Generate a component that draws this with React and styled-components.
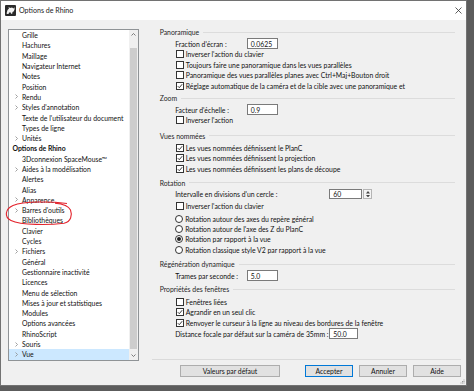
import React from "react";
import styled, { createGlobalStyle } from "styled-components";

const GlobalStyle = createGlobalStyle`
  * { box-sizing: border-box; }
  html, body { margin: 0; padding: 0; background: #5c5c5c; }
  body {
    font-family: Lato, "Noto Sans", sans-serif;
    font-size: 6.85px;
    color: #111;
  }
  #root { width: 474px; height: 391px; overflow: hidden; }
`;

const treeItems = [
  { label: "Grille" },
  { label: "Hachures" },
  { label: "Maillage" },
  { label: "Navigateur Internet" },
  { label: "Notes" },
  { label: "Position" },
  { label: "Rendu", more: true },
  { label: "Styles d'annotation", more: true },
  { label: "Texte de l'utilisateur du document" },
  { label: "Types de ligne" },
  { label: "Unités", more: true },
  { label: "Options de Rhino", root: true },
  { label: "3Dconnexion SpaceMouse™" },
  { label: "Aides à la modélisation", more: true },
  { label: "Alertes" },
  { label: "Alias" },
  { label: "Apparence", more: true },
  { label: "Barres d'outils", more: true },
  { label: "Bibliothèques" },
  { label: "Clavier" },
  { label: "Cycles" },
  { label: "Fichiers", more: true },
  { label: "Général" },
  { label: "Gestionnaire inactivité" },
  { label: "Licences" },
  { label: "Menu de sélection" },
  { label: "Mises à jour et statistiques" },
  { label: "Modules" },
  { label: "Options avancées" },
  { label: "RhinoScript" },
  { label: "Souris", more: true },
  { label: "Vue", more: true, selected: true },
];

const Window = styled.div`
  position: relative;
  width: 467px;
  height: 386px;
  background: #f0f0f0;
  border: 1px solid #727272;
  display: flex;
  flex-direction: column;
`;

const TitleBar = styled.div`
  height: 19px;
  background: #ffffff;
  display: flex;
  align-items: center;
  padding: 0 0 0 4px;
  gap: 3px;
  font-size: 7.1px;
  color: #222;
`;

const Title = styled.span`
  flex: 1;
`;

const CloseBtn = styled.div`
  width: 14px;
  height: 19px;
  display: flex;
  align-items: center;
  justify-content: center;
  margin-right: 1px;
`;

const Body = styled.div`
  flex: 1;
  display: flex;
  padding: 6px 5px 8px 7px;
  gap: 13px;
`;

const TreeBox = styled.div`
  width: 131px;
  height: 332px;
  margin-top: 3px;
  border: 1px solid #8f9396;
  background: #ffffff;
  display: flex;
`;

const TreeList = styled.div`
  flex: 1;
  display: flex;
  flex-direction: column;
  overflow: hidden;
`;

const TreeRow = styled.div`
  height: 10.3px;
  flex: none;
  display: flex;
  align-items: center;
  padding-left: ${(p) => (p.$root ? "3.5px" : "4px")};
  font-weight: ${(p) => (p.$root ? 700 : 400)};
  background: ${(p) => (p.$selected ? "#cce8ff" : "transparent")};
  white-space: nowrap;
`;

const Expander = styled.span`
  width: 9px;
  flex: none;
  display: flex;
  align-items: center;
  padding-left: 1.5px;
`;

const ScrollBar = styled.div`
  width: 9px;
  background: #f0f0f0;
  display: flex;
  flex-direction: column;
`;

const ScrollArrow = styled.div`
  height: 9px;
  display: flex;
  align-items: center;
  justify-content: center;
`;

const ScrollThumb = styled.div`
  flex: 1;
  margin: 9px 1px 2px;
  background: #cdcdcd;
`;

const Panel = styled.div`
  width: 310px;
  display: flex;
  flex-direction: column;
`;

const Groups = styled.div`
  flex: 1;
  display: flex;
  flex-direction: column;
`;

const Group = styled.div`
  margin-top: ${(p) => p.$mt || 0}px;
  display: flex;
  flex-direction: column;
  padding-right: 6px;
`;

const GroupHeader = styled.div`
  height: 12px;
  display: flex;
  align-items: center;
  gap: 4px;
  padding-left: 8px;
  color: #1f1f1f;
  &::after {
    content: "";
    flex: 1;
    height: 1px;
    background: #dcdcdc;
  }
`;

const CheckRow = styled.div`
  height: 10.5px;
  margin-top: ${(p) => p.$mt || 0}px;
  display: flex;
  align-items: center;
  gap: 2px;
  padding-left: 24px;
  white-space: nowrap;
`;

const Box = styled.span`
  width: 8px;
  height: 8px;
  flex: none;
  border: 1px solid #333;
  background: #fff;
  display: flex;
  align-items: center;
  justify-content: center;
`;

const RadioList = styled.div`
  margin-top: 2.5px;
  display: flex;
  flex-direction: column;
`;

const RadioRow = styled.div`
  height: 10.3px;
  display: flex;
  align-items: center;
  gap: 2px;
  padding-left: 23.5px;
  white-space: nowrap;
`;

const RadioCircle = styled.span`
  width: 8px;
  height: 8px;
  flex: none;
  border-radius: 50%;
  border: 1px solid #333;
  background: #fff;
  display: flex;
  align-items: center;
  justify-content: center;
  &::after {
    content: "";
    width: 4px;
    height: 4px;
    border-radius: 50%;
    background: ${(p) => (p.$on ? "#222" : "transparent")};
  }
`;

const FieldRow = styled.div`
  height: 11px;
  display: flex;
  align-items: center;
  padding-left: 23.5px;
  white-space: nowrap;
`;

const FieldLabel = styled.span`
  width: ${(p) => p.$w}px;
  flex: none;
`;

const TextBox = styled.div`
  width: ${(p) => p.$w}px;
  height: 10.5px;
  flex: none;
  border: 1px solid #7a7a7a;
  background: #fff;
  display: flex;
  align-items: center;
  padding-left: 3px;
`;

const SpinArrows = styled.div`
  width: 9px;
  height: 10.5px;
  margin-left: 1px;
  display: flex;
  flex-direction: column;
  align-items: center;
  justify-content: center;
  gap: 1px;
  border: 1px solid #b5b5b5;
  background: #f4f4f4;
`;

const Separator = styled.div`
  height: 1px;
  width: 309px;
  background: #dadada;
`;

const ButtonRow = styled.div`
  margin-top: 5px;
  height: 12px;
  display: flex;
  justify-content: flex-end;
  gap: 6px;
`;

const Button = styled.div`
  width: ${(p) => p.$w}px;
  height: 12px;
  margin-right: ${(p) => p.$mr || 0}px;
  background: #e1e1e1;
  border: 1px solid ${(p) => (p.$primary ? "#0078d7" : "#adadad")};
  display: flex;
  align-items: center;
  justify-content: center;
`;

const Annotation = styled.svg`
  position: absolute;
  left: -1px;
  top: -1px;
  pointer-events: none;
`;

const Grip = styled.svg`
  position: absolute;
  right: 1px;
  bottom: 1px;
`;

const Chevron = () => (
  <svg width="3" height="5" viewBox="0 0 3 5">
    <path d="M0.5 0.5 L2.5 2.5 L0.5 4.5" fill="none" stroke="#8a8a8a" strokeWidth="0.8" />
  </svg>
);

const Check = ({ on, children, mt }) => (
  <CheckRow $mt={mt}>
    <Box>
      {on && (
        <svg width="6" height="6" viewBox="0 0 6 6">
          <path d="M0.8 3.2 L2.3 4.7 L5.2 1.2" fill="none" stroke="#222" strokeWidth="0.9" />
        </svg>
      )}
    </Box>
    <span>{children}</span>
  </CheckRow>
);

const Radio = ({ on, children }) => (
  <RadioRow>
    <RadioCircle $on={on} />
    <span>{children}</span>
  </RadioRow>
);

const Field = ({ label, labelWidth, value, width }) => (
  <FieldRow>
    <FieldLabel $w={labelWidth}>{label}</FieldLabel>
    <TextBox $w={width}>{value}</TextBox>
  </FieldRow>
);

const RhinoIcon = () => (
  <svg width="11" height="11" viewBox="0 0 11 11">
    <rect x="0" y="0" width="11" height="11" rx="1" fill="#2a2a2a" />
    <path
      d="M1.5 8.5 L2.5 5 L4 3.5 L3.5 1.8 L5 3 L7 2.5 L8.5 3.5 L9.6 2.2 L9.5 4.8 L8.6 6.5 L7.5 7 L7.2 8.8 L6 8.8 L5.8 7.4 L4 7.6 L3.6 9 L2.4 9 Z"
      fill="#f2f2f2"
    />
  </svg>
);

export default function App() {
  return (
    <>
      <GlobalStyle />
      <Window>
        <TitleBar>
          <RhinoIcon />
          <Title>Options de Rhino</Title>
          <CloseBtn>
            <svg width="7" height="7" viewBox="0 0 7 7">
              <path d="M0.5 0.5 L6.5 6.5 M6.5 0.5 L0.5 6.5" stroke="#333" strokeWidth="0.8" />
            </svg>
          </CloseBtn>
        </TitleBar>

        <Body>
          <TreeBox>
            <TreeList>
              {treeItems.map((item) => (
                <TreeRow key={item.label} $root={item.root} $selected={item.selected}>
                  {!item.root && <Expander>{item.more && <Chevron />}</Expander>}
                  <span>{item.label}</span>
                </TreeRow>
              ))}
            </TreeList>
            <ScrollBar>
              <ScrollArrow>
                <svg width="5" height="3" viewBox="0 0 5 3">
                  <path d="M0.5 2.5 L2.5 0.5 L4.5 2.5" fill="none" stroke="#606060" strokeWidth="0.8" />
                </svg>
              </ScrollArrow>
              <ScrollThumb />
              <ScrollArrow>
                <svg width="5" height="3" viewBox="0 0 5 3">
                  <path d="M0.5 0.5 L2.5 2.5 L4.5 0.5" fill="none" stroke="#606060" strokeWidth="0.8" />
                </svg>
              </ScrollArrow>
            </ScrollBar>
          </TreeBox>

          <Panel>
            <Groups>
              <Group>
                <GroupHeader>Panoramique</GroupHeader>
                <Field label="Fraction d'écran :" labelWidth={71.5} value="0.0625" width={31} />
                <Check>Inverser l'action du clavier</Check>
                <Check>Toujours faire une panoramique dans les vues parallèles</Check>
                <Check>Panoramique des vues parallèles planes avec Ctrl+Maj+Bouton droit</Check>
                <Check on>Réglage automatique de la caméra et de la cible avec une panoramique et</Check>
              </Group>

              <Group $mt={1}>
                <GroupHeader>Zoom</GroupHeader>
                <Field label="Facteur d'échelle :" labelWidth={71.5} value="0.9" width={31} />
                <Check>Inverser l'action</Check>
              </Group>

              <Group $mt={4}>
                <GroupHeader>Vues nommées</GroupHeader>
                <Check on mt={1}>Les vues nommées définissent le PlanC</Check>
                <Check on>Les vues nommées définissent la projection</Check>
                <Check on>Les vues nommées définissent les plans de découpe</Check>
              </Group>

              <Group $mt={2.5}>
                <GroupHeader>Rotation</GroupHeader>
                <FieldRow>
                  <FieldLabel $w={154}>Intervalle en divisions d'un cercle :</FieldLabel>
                  <TextBox $w={33}>60</TextBox>
                  <SpinArrows>
                    <svg width="4" height="2.5" viewBox="0 0 4 2.5">
                      <path d="M0 2.5 L2 0 L4 2.5 Z" fill="#444" />
                    </svg>
                    <svg width="4" height="2.5" viewBox="0 0 4 2.5">
                      <path d="M0 0 L2 2.5 L4 0 Z" fill="#444" />
                    </svg>
                  </SpinArrows>
                </FieldRow>
                <Check mt={1}>Inverser l'action du clavier</Check>
                <RadioList>
                  <Radio>Rotation autour des axes du repère général</Radio>
                  <Radio>Rotation autour de l'axe des Z du PlanC</Radio>
                  <Radio on>Rotation par rapport à la vue</Radio>
                  <Radio>Rotation classique style V2 par rapport à la vue</Radio>
                </RadioList>
              </Group>

              <Group $mt={3.5}>
                <GroupHeader>Régénération dynamique</GroupHeader>
                <Field label="Trames par seconde :" labelWidth={71.5} value="5.0" width={31} />
              </Group>

              <Group $mt={2}>
                <GroupHeader>Propriétés des fenêtres</GroupHeader>
                <Check mt={1.5}>Fenêtres liées</Check>
                <Check on>Agrandir en un seul clic</Check>
                <Check on>Renvoyer le curseur à la ligne au niveau des bordures de la fenêtre</Check>
                <Field
                  label="Distance focale par défaut sur la caméra de 35mm :"
                  labelWidth={154}
                  value="50.0"
                  width={29}
                />
              </Group>
            </Groups>

            <Separator />
            <ButtonRow>
              <Button $w={100} $mr={19}>Valeurs par défaut</Button>
              <Button $w={48} $primary>Accepter</Button>
              <Button $w={48}>Annuler</Button>
              <Button $w={48}>Aide</Button>
            </ButtonRow>
          </Panel>
        </Body>

        <Annotation width="80" height="232" viewBox="0 0 80 232">
          <path
            d="M67 203.5 C52 201.5 24 201 13 205.5 C5 209 4 217 11 220.5 C21 225.5 50 225 64 223.2 C71 222 72.5 215 70.5 210 C68.5 205.5 62 203.8 55 203.2"
            fill="none"
            stroke="#e3232c"
            strokeWidth="1.1"
          />
        </Annotation>
        <Grip width="5" height="5" viewBox="0 0 5 5">
          <rect x="3.5" y="0.5" width="1" height="1" fill="#9a9a9a" />
          <rect x="2" y="2" width="1" height="1" fill="#9a9a9a" />
          <rect x="3.5" y="2" width="1" height="1" fill="#9a9a9a" />
          <rect x="0.5" y="3.5" width="1" height="1" fill="#9a9a9a" />
          <rect x="2" y="3.5" width="1" height="1" fill="#9a9a9a" />
          <rect x="3.5" y="3.5" width="1" height="1" fill="#9a9a9a" />
        </Grip>
      </Window>
    </>
  );
}
